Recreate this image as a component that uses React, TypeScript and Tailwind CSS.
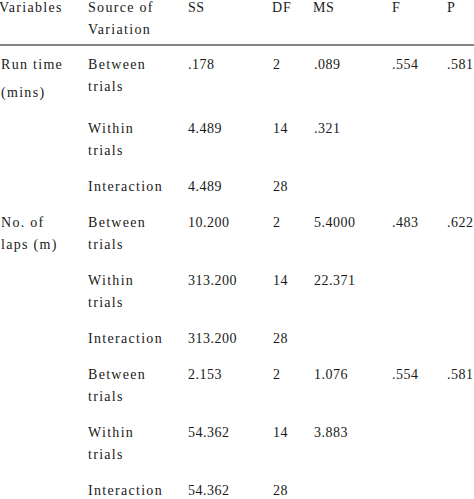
type Row = {
  variable?: string[];
  source: string[];
  ss: string;
  df: string;
  ms?: string;
  f?: string;
  p?: string;
};

const rows: Row[] = [
  { variable: ["Run time", "(mins)"], source: ["Between", "trials"], ss: ".178", df: "2", ms: ".089", f: ".554", p: ".581" },
  { source: ["Within", "trials"], ss: "4.489", df: "14", ms: ".321" },
  { source: ["Interaction"], ss: "4.489", df: "28" },
  { variable: ["No. of", "laps (m)"], source: ["Between", "trials"], ss: "10.200", df: "2", ms: "5.4000", f: ".483", p: ".622" },
  { source: ["Within", "trials"], ss: "313.200", df: "14", ms: "22.371" },
  { source: ["Interaction"], ss: "313.200", df: "28" },
  { source: ["Between", "trials"], ss: "2.153", df: "2", ms: "1.076", f: ".554", p: ".581" },
  { source: ["Within", "trials"], ss: "54.362", df: "14", ms: "3.883" },
  { source: ["Interaction"], ss: "54.362", df: "28" },
];

const grid = "grid grid-cols-[88px_100px_84px_41px_79px_55px_60px]";

function Lines({ items, gapSecond }: { items?: string[]; gapSecond?: boolean }) {
  if (!items) return <div />;
  return (
    <div className="tracking-[1.3px]">
      {items.map((t, i) => (
        <div key={i} className={i === 1 && gapSecond ? "mt-[6px]" : ""}>
          {t}
        </div>
      ))}
    </div>
  );
}

export default function App() {
  return (
    <div
      className="w-[474px] h-[499px] overflow-hidden bg-white text-[#1a1a1a] text-[14px] leading-[22px]"
      style={{ fontFamily: '"Liberation Serif", "Times New Roman", serif' }}
    >
      {/* header, first line sits right at the top edge */}
      <div className={`${grid} mt-[-3px] pb-[3px] ml-[-1px]`}>
        <div className="tracking-[1.3px]">Variables</div>
        <div className="tracking-[1.3px] pl-[1px]">
          <div>Source of</div>
          <div>Variation</div>
        </div>
        <div className="tracking-[0.5px] pl-[1px]">SS</div>
        <div className="tracking-[0.8px] pl-[1px]">DF</div>
        <div className="tracking-[0.5px] pl-[1px]">MS</div>
        <div className="pl-[1px]">F</div>
        <div className="pl-[1px]">P</div>
      </div>
      <div className="h-[2px] bg-[#858585]" />
      <div className="pt-[1px]">
        {rows.map((r, i) => (
          <div key={i} className={`${grid} py-[7px]`}>
            <div className="ml-[1px]">
              <Lines items={r.variable} gapSecond={i === 0} />
            </div>
            <Lines items={r.source} />
            <div className="tracking-[0.5px]">{r.ss}</div>
            <div className="tracking-[0.5px] pl-[1px]">{r.df}</div>
            <div className="tracking-[0.5px] pl-[1px]">{r.ms}</div>
            <div className="tracking-[0.5px]">{r.f}</div>
            <div className="tracking-[0.5px]">{r.p}</div>
          </div>
        ))}
      </div>
    </div>
  );
}
